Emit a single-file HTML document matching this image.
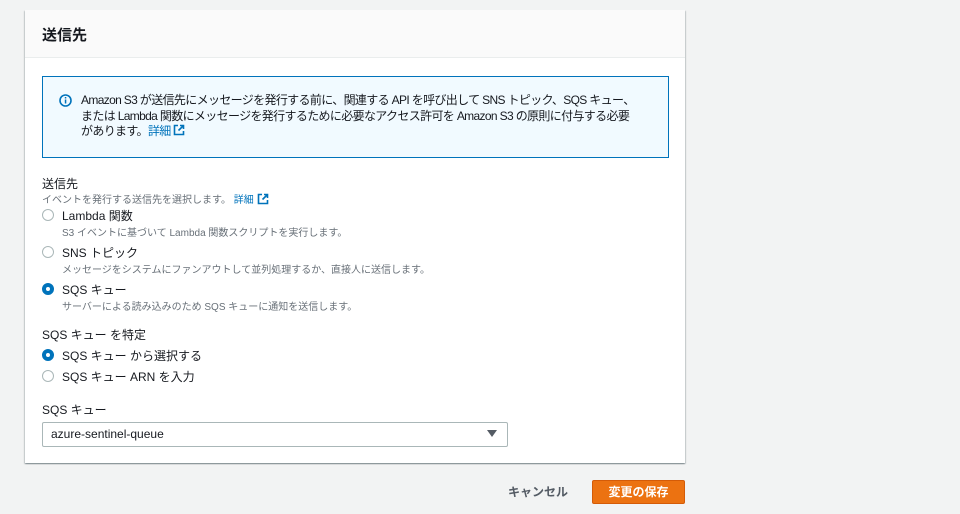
<!DOCTYPE html>
<html><head><meta charset="utf-8"><style>
*{margin:0;padding:0;box-sizing:border-box}
body{width:960px;height:514px;background:#f2f3f3;font-family:"Liberation Sans","Noto Sans CJK JP",sans-serif;color:#16191f;position:relative;overflow:hidden;font-size:12px}
.a{position:absolute;white-space:nowrap}
.card{position:absolute;left:25px;top:10px;width:660px;height:453px;background:#fff;box-shadow:0 1px 1px rgba(0,28,36,.3),1px 1px 1px rgba(0,28,36,.15),-1px 1px 1px rgba(0,28,36,.15)}
.hdr{position:absolute;left:0;top:0;width:660px;height:48px;background:#fafafa;border-bottom:1px solid #eaeded}
.info{position:absolute;left:42px;top:76px;width:627px;height:82px;background:#f1faff;border:1px solid #0073bb}
.radio{position:absolute;width:12px;height:12px;border-radius:50%;border:1px solid #aab7b8;background:#fff}
.radio.on{border:4px solid #0073bb}
.s{font-size:10px;color:#687078}
.lnk{color:#0073bb}
</style></head><body>
<div class="card"><div class="hdr"></div></div>
<div class="a" style="left:42px;top:24px;font-size:15px;font-weight:bold">送信先</div>
<div class="info"></div>
<svg class="a" style="left:59px;top:94px" width="13" height="13" viewBox="0 0 13 13"><circle cx="6.5" cy="6.5" r="5.5" fill="none" stroke="#0073bb" stroke-width="1.6"/><rect x="5.8" y="5.5" width="1.5" height="4" fill="#0073bb"/><rect x="5.8" y="3" width="1.5" height="1.5" fill="#0073bb"/></svg>
<div class="a" style="left:81px;top:93px;font-size:12px;line-height:15.5px;letter-spacing:-0.65px">Amazon S3 が送信先にメッセージを発行する前に、関連する API を呼び出して SNS トピック、SQS キュー、<br>または Lambda 関数にメッセージを発行するために必要なアクセス許可を Amazon S3 の原則に付与する必要<br>があります。<span class="lnk">詳細</span> <svg width="12" height="12" viewBox="0 0 12 12" style="vertical-align:-1px"><path d="M5 1.5H1.5v9h9V7M7 1.5h3.5V5M10.5 1.5L5.5 6.5" fill="none" stroke="#0073bb" stroke-width="1.6"/></svg></div>
<div class="a" style="left:42px;top:175px;font-size:12px">送信先</div>
<div class="a s" style="left:42px;top:191px">イベントを発行する送信先を選択します。 <span class="lnk">詳細</span> <svg width="12" height="12" viewBox="0 0 12 12" style="vertical-align:-2px"><path d="M5 1.5H1.5v9h9V7M7 1.5h3.5V5M10.5 1.5L5.5 6.5" fill="none" stroke="#0073bb" stroke-width="1.6"/></svg></div>
<div class="radio" style="left:42px;top:209px"></div>
<div class="a" style="left:62px;top:207px">Lambda 関数</div>
<div class="a s" style="left:62px;top:224px">S3 イベントに基づいて Lambda 関数スクリプトを実行します。</div>
<div class="radio" style="left:42px;top:246px"></div>
<div class="a" style="left:62px;top:244px">SNS トピック</div>
<div class="a s" style="left:62px;top:261px">メッセージをシステムにファンアウトして並列処理するか、直接人に送信します。</div>
<div class="radio on" style="left:42px;top:283px"></div>
<div class="a" style="left:62px;top:281px">SQS キュー</div>
<div class="a s" style="left:62px;top:298px">サーバーによる読み込みのため SQS キューに通知を送信します。</div>
<div class="a" style="left:42px;top:326px">SQS キュー を特定</div>
<div class="radio on" style="left:42px;top:349px"></div>
<div class="a" style="left:62px;top:347px">SQS キュー から選択する</div>
<div class="radio" style="left:42px;top:370px"></div>
<div class="a" style="left:62px;top:368px">SQS キュー ARN を入力</div>
<div class="a" style="left:42px;top:401px">SQS キュー</div>
<div class="a" style="left:42px;top:422px;width:466px;height:25px;border:1px solid #aab7b8;border-radius:2px;background:#fff"></div>
<div class="a" style="left:51px;top:427px">azure-sentinel-queue</div>
<svg class="a" style="left:487px;top:430px" width="10" height="8"><path d="M0 0H10L5 7Z" fill="#545b64"/></svg>
<div class="a" style="left:508px;top:483px;font-weight:bold;color:#545b64">キャンセル</div>
<div class="a" style="left:592px;top:480px;width:93px;height:24px;background:#ec7211;border:1px solid #d45b07;border-radius:2px;color:#fff;font-weight:bold;text-align:center;line-height:22px">変更の保存</div>
</body></html>
